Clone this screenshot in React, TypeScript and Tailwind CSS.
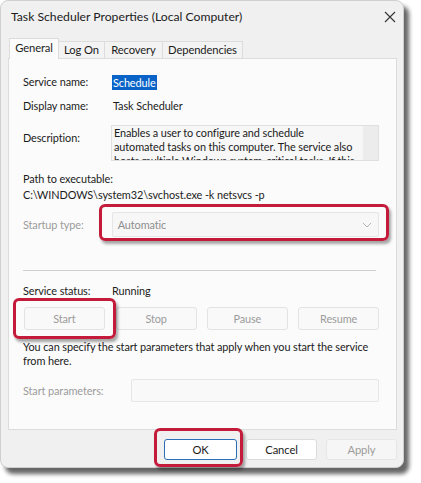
import React from "react";

const font = { fontFamily: 'Lato, "Liberation Sans", Arial, sans-serif' };

function Btn({ label, w, disabled }: { label: string; w: string; disabled?: boolean }) {
  return (
    <div
      className={`${w} h-[23px] flex items-center justify-center rounded-[3px] border border-[#e3e3e3] bg-[#f9f9f9] ${
        disabled ? "text-[#9b9b9b]" : "text-[#1b1b1b]"
      }`}
    >
      {label}
    </div>
  );
}

export default function App() {
  return (
    <div className="w-[421px] h-[483px] bg-white relative overflow-hidden text-[10.9px] tracking-[-0.1px] leading-[16px] text-[#1b1b1b]" style={font}>
      <div className="relative w-[404px] h-[468px] bg-[#f0f0f0] rounded-[8px] border border-[#cfcfcf] shadow-[5px_6px_4px_rgba(0,0,0,0.6)] flex flex-col">
        {/* title bar */}
        <div className="h-[30px] flex items-center justify-between pl-[10px] pr-[7px] pt-[2px]">
          <span className="text-[12.2px] tracking-[0px] text-[#1b1b1b]">Task Scheduler Properties (Local Computer)</span>
          <svg width="12" height="12" viewBox="0 0 12 12">
            <path d="M1 1 L11 11 M11 1 L1 11" stroke="#333" strokeWidth="1.1" />
          </svg>
        </div>
        {/* tabs */}
        <div className="h-[27px] flex items-end pl-[8px] text-[11.2px]">
          <div className="w-[50px] flex items-start justify-center pt-[1px] bg-[#fbfbfb] border border-b-0 border-[#dcdcdc] relative z-10 -mb-[1px] h-[21px]">
            General
          </div>
          <div className="h-[17px] w-[46px] flex items-center justify-center border border-b-0 border-l-0 border-[#dcdcdc] bg-[#f3f3f3]">
            Log On
          </div>
          <div className="h-[17px] w-[58px] flex items-center justify-center border border-b-0 border-l-0 border-[#dcdcdc] bg-[#f3f3f3]">
            Recovery
          </div>
          <div className="h-[17px] w-[80px] flex items-center justify-center border border-b-0 border-l-0 border-[#dcdcdc] bg-[#f3f3f3]">
            Dependencies
          </div>
        </div>
        {/* panel */}
        <div className="ml-[7px] w-[389px] h-[372px] bg-[#fbfbfb] border border-[#dcdcdc] flex flex-col pl-[14px] pr-[17px] pt-[15px]">
          <div className="flex items-center h-[16px]">
            <span className="w-[89px]">Service name:</span>
            <span className="bg-[#0a64c8] text-white px-[1px] leading-[15px]">Schedule</span>
          </div>
          <div className="flex items-center h-[16px] mt-[8px]">
            <span className="w-[90px]">Display name:</span>
            <span>Task Scheduler</span>
          </div>
          <div className="flex mt-[11px]">
            <span className="w-[88px] pt-[5px]">Description:</span>
            <div className="w-[268px] h-[36px] border border-[#e0e0e0] bg-[#f7f7f7] flex overflow-hidden">
              <div className="flex-1 pl-[2px] leading-[14px] overflow-hidden whitespace-nowrap">
                Enables a user to configure and schedule
                <br />
                automated tasks on this computer. The service also
                <br />
                hosts multiple Windows system-critical tasks. If this
              </div>
              <div className="w-[15px] bg-[#ececec]" />
            </div>
          </div>
          <div className="mt-[10px] h-[16px] flex items-center">Path to executable:</div>
          <div className="h-[16px] flex items-center">C:\WINDOWS\system32\svchost.exe -k netsvcs -p</div>
          <div className="flex items-center mt-[9px]">
            <span className="w-[89px] text-[#9b9b9b]">Startup type:</span>
            <div className="w-[268px] h-[25px] border border-[#e6e6e6] bg-[#f7f7f7] rounded-[2px] flex items-center justify-between pl-[5px] pr-[6px] text-[#8e8e8e]">
              <span>Automatic</span>
              <svg width="10" height="6" viewBox="0 0 10 6">
                <path d="M1 1 L5 5 L9 1" stroke="#b5b5b5" strokeWidth="1" fill="none" />
              </svg>
            </div>
          </div>
          <div className="mt-[33px] h-[1px] bg-[#cfcfcf] w-[353px]" />
          <div className="flex items-center h-[16px] mt-[12px]">
            <span className="w-[89px]">Service status:</span>
            <span>Running</span>
          </div>
          <div className="flex mt-[8px]">
            <Btn label="Start" w="w-[82px] ml-[1px]" disabled />
            <Btn label="Stop" w="w-[82px] ml-[11px]" disabled />
            <Btn label="Pause" w="w-[83px] ml-[10px]" disabled />
            <Btn label="Resume" w="w-[82px] ml-[10px]" disabled />
          </div>
          <div className="mt-[10px] leading-[14px] whitespace-nowrap">
            You can specify the start parameters that apply when you start the service
            <br />
            from here.
          </div>
          <div className="flex items-center mt-[11px]">
            <span className="w-[108px] text-[#9b9b9b]">Start parameters:</span>
            <div className="w-[248px] h-[23px] border border-[#e6e6e6] bg-[#f9f9f9] rounded-[2px]" />
          </div>
        </div>
        {/* bottom buttons */}
        <div className="flex justify-end pr-[6px] mt-[9px] gap-[9px] text-[11.2px]">
          <div className="w-[73px] h-[21px] flex items-center justify-center rounded-[3px] border border-[#2a6fb5] bg-white text-[#1b1b1b]">
            OK
          </div>
          <div className="w-[71px] h-[21px] flex items-center justify-center rounded-[3px] border border-[#dcdcdc] bg-white">
            Cancel
          </div>
          <div className="w-[71px] h-[21px] flex items-center justify-center rounded-[3px] border border-[#e6e6e6] bg-[#f6f6f6] text-[#9b9b9b]">
            Apply
          </div>
        </div>
      </div>
      {/* red highlight overlays */}
      <div className="absolute left-[99px] top-[204px] w-[290px] h-[37px] rounded-[6px] border-[3px] border-[#c41b3b] shadow-[2px_3px_3px_rgba(0,0,0,0.35)]" />
      <div className="absolute left-[13px] top-[298px] w-[103px] h-[41px] rounded-[6px] border-[3px] border-[#c41b3b] shadow-[2px_3px_3px_rgba(0,0,0,0.35)]" />
      <div className="absolute left-[154px] top-[428px] w-[89px] h-[39px] rounded-[6px] border-[3px] border-[#c41b3b] shadow-[2px_3px_3px_rgba(0,0,0,0.35)]" />
    </div>
  );
}
